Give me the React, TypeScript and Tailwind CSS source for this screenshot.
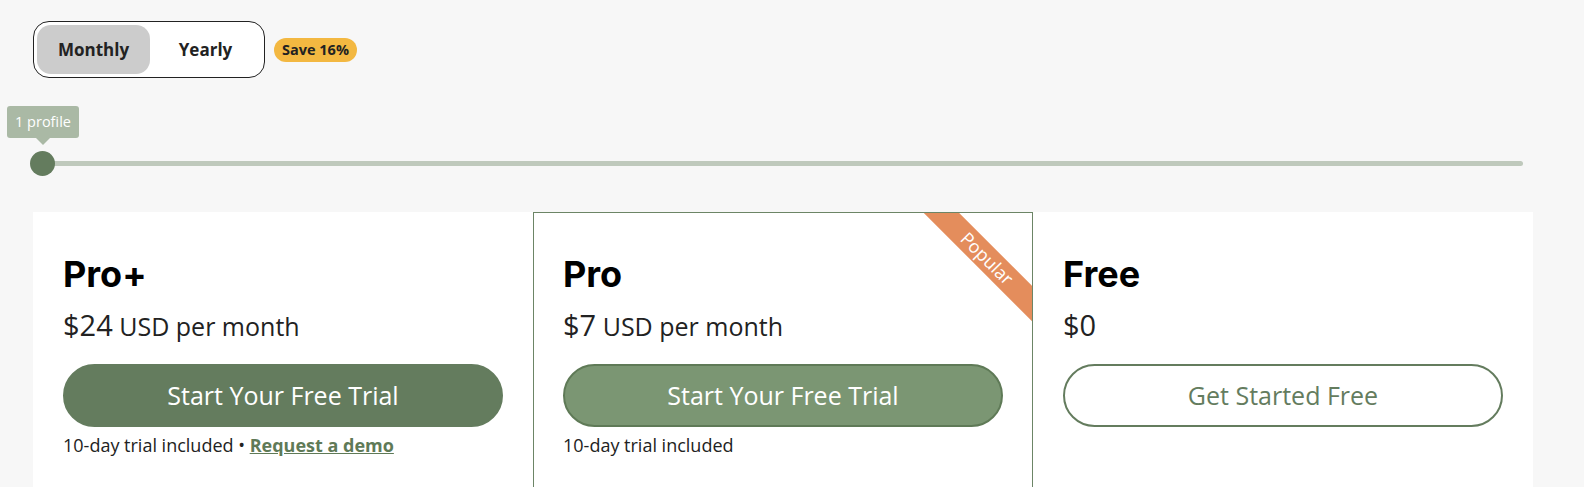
const plans = [
  {
    name: "Pro+",
    price: "$24",
    suffix: "USD per month",
    cta: "Start Your Free Trial",
    style: "bg-[#647c5e] text-white border-2 border-[#647c5e]",
    note: true,
    demo: true,
    popular: false,
  },
  {
    name: "Pro",
    price: "$7",
    suffix: "USD per month",
    cta: "Start Your Free Trial",
    style: "bg-[#7b9673] text-white border-2 border-[#5f7a57]",
    note: true,
    demo: false,
    popular: true,
  },
  {
    name: "Free",
    price: "$0",
    suffix: "",
    cta: "Get Started Free",
    style: "bg-white text-[#647c5e] border-2 border-[#647c5e]",
    note: false,
    demo: false,
    popular: false,
  },
];

const App = () => {
  return (
    <div className="min-h-screen bg-[#f7f7f7] px-[33px] pt-[21px] font-['Open_Sans',sans-serif] text-[#222]">
      {/* billing toggle */}
      <div className="flex items-center gap-[9px]">
        <div className="flex h-[57px] w-[232px] rounded-[16px] border border-[#222] bg-white p-[3px]">
          <div className="flex w-[113px] items-center justify-center rounded-[14px] bg-[#cccccc] text-[17px] font-bold">
            Monthly
          </div>
          <div className="flex flex-1 items-center justify-center text-[17px] font-bold">Yearly</div>
        </div>
        <div className="flex h-[24px] items-center rounded-full bg-[#f3b841] px-[8px] text-[14.5px] font-bold">
          Save 16%
        </div>
      </div>

      {/* profiles slider */}
      <div className="relative mt-[28px] h-[70px] w-[1500px]">
        <div className="absolute left-[-26px] top-0 flex h-[32px] w-[72px] items-center justify-center rounded-[3px] bg-[#aab9a5] text-[14.5px] text-white">
          1 profile
          <div className="absolute left-[29px] top-[32px] h-0 w-0 border-x-[7px] border-t-[7px] border-x-transparent border-t-[#aab9a5]"></div>
        </div>
        <div className="absolute left-0 right-[10px] top-[55px] h-[5px] rounded-full bg-[#bfc9bc]"></div>
        <div className="absolute left-[-3px] top-[45px] h-[25px] w-[25px] rounded-full bg-[#647c5e]"></div>
      </div>

      {/* plans */}
      <div className="mt-[36px] grid w-[1500px] grid-cols-3">
        {plans.map((p) => (
          <div
            key={p.name}
            className={
              p.popular
                ? "relative h-[300px] overflow-hidden border border-[#6c8566] bg-white px-[29px] pt-[39px]"
                : "relative h-[300px] bg-white px-[30px] pt-[40px]"
            }
          >
            {p.popular && (
              <div className="absolute right-[-55px] top-[33px] flex h-[25px] w-[200px] rotate-45 items-center justify-center bg-[#e48d5c] text-[18px] text-white">
                Popular
              </div>
            )}
            <div className="font-['Inter',sans-serif] text-[36px] font-bold leading-[44px] text-black">{p.name}</div>
            <div className="mt-[9px] leading-[40px]">
              <span className="text-[29px]">{p.price}</span>
              {p.suffix && <span className="text-[25px]"> {p.suffix}</span>}
            </div>
            <button className={"mt-[14px] flex h-[63px] w-full items-center justify-center rounded-full text-[25px] " + p.style}>
              {p.cta}
            </button>
            {p.note && (
              <div className="mt-[6px] text-[18px] leading-[24px]">
                10-day trial included
                {p.demo && (
                  <>
                    {" • "}
                    <a className="font-bold text-[#5f7a57] underline">Request a demo</a>
                  </>
                )}
              </div>
            )}
          </div>
        ))}
      </div>
    </div>
  );
};

export default App;
